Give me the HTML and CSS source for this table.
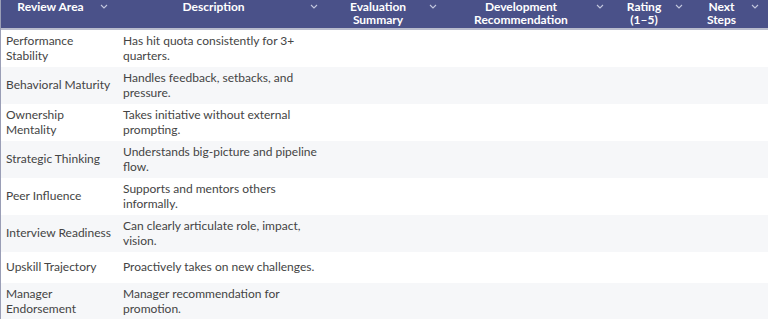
FILE: index.html
```html
<!DOCTYPE html>
<html lang="en">
<head>
<meta charset="utf-8">
<title>Review Table</title>
<link rel="stylesheet" href="styles.css">
</head>
<body>
<div class="wrap">
<table class="review">
  <colgroup>
    <col class="c-area"><col class="c-desc"><col class="c-eval"><col class="c-dev"><col class="c-rate"><col class="c-next">
  </colgroup>
  <thead>
    <tr>
      <th><div class="hcell"><span class="htext">Review Area</span><svg class="chev" viewBox="0 0 8 5"><polyline points="1,1 4,4 7,1"/></svg></div></th>
      <th><div class="hcell"><span class="htext">Description</span><svg class="chev" viewBox="0 0 8 5"><polyline points="1,1 4,4 7,1"/></svg></div></th>
      <th><div class="hcell"><span class="htext">Evaluation Summary</span><svg class="chev" viewBox="0 0 8 5"><polyline points="1,1 4,4 7,1"/></svg></div></th>
      <th><div class="hcell"><span class="htext">Development Recommendation</span><svg class="chev" viewBox="0 0 8 5"><polyline points="1,1 4,4 7,1"/></svg></div></th>
      <th><div class="hcell"><span class="htext">Rating (1–5)</span><svg class="chev" viewBox="0 0 8 5"><polyline points="1,1 4,4 7,1"/></svg></div></th>
      <th><div class="hcell"><span class="htext">Next Steps</span><svg class="chev" viewBox="0 0 8 5"><polyline points="1,1 4,4 7,1"/></svg></div></th>
    </tr>
  </thead>
  <tbody>
    <tr><td>Performance Stability</td><td>Has hit quota consistently for 3+ quarters.</td><td></td><td></td><td></td><td></td></tr>
    <tr><td>Behavioral Maturity</td><td>Handles feedback, setbacks, and pressure.</td><td></td><td></td><td></td><td></td></tr>
    <tr><td>Ownership Mentality</td><td>Takes initiative without external prompting.</td><td></td><td></td><td></td><td></td></tr>
    <tr><td>Strategic Thinking</td><td>Understands big-picture and pipeline flow.</td><td></td><td></td><td></td><td></td></tr>
    <tr><td>Peer Influence</td><td>Supports and mentors others informally.</td><td></td><td></td><td></td><td></td></tr>
    <tr><td>Interview Readiness</td><td>Can clearly articulate role, impact, vision.</td><td></td><td></td><td></td><td></td></tr>
    <tr><td>Upskill Trajectory</td><td>Proactively takes on new challenges.</td><td></td><td></td><td></td><td></td></tr>
    <tr><td>Manager Endorsement</td><td>Manager recommendation for promotion.</td><td></td><td></td><td></td><td></td></tr>
  </tbody>
</table>
</div>
</body>
</html>
```

FILE: styles.css
```css
html, body {
  margin: 0;
  padding: 0;
  background: #ffffff;
}
.wrap {
  margin-top: -5px;
  border-left: 1px solid #9a9eb6;
  border-bottom: 2px solid #a8abc0;
}
.review {
  width: 767px;
  border-collapse: collapse;
  table-layout: fixed;
  font-family: Lato, "Noto Sans", sans-serif;
}
.c-area { width: 116px; }
.c-desc { width: 210px; }
.c-eval { width: 119px; }
.c-dev { width: 167px; }
.c-rate { width: 79px; }
.c-next { width: 76px; }

.review th {
  background: #4a5189;
  color: #ffffff;
  font-weight: 700;
  font-size: 12px;
  line-height: 13px;
  padding: 5px 6px 2px 6px;
  border-bottom: 2px solid #b9bccd;
  vertical-align: top;
}
.hcell {
  display: flex;
  align-items: flex-start;
}
.htext {
  flex: 1;
  text-align: center;
  white-space: normal;
}
.chev {
  width: 8px;
  height: 5px;
  margin: 4px 3px 0 6px;
  flex: none;
  fill: none;
  stroke: #c3c7de;
  stroke-width: 1.1;
}
.review td {
  font-size: 12px;
  line-height: 14.5px;
  color: #444444;
  padding: 4px 6px;
  vertical-align: middle;
  height: 23px;
}
.review td:first-child {
  padding: 4px 2px 4px 5px;
}
.review tbody tr:nth-child(even) td {
  background: #f6f7f9;
}
```
